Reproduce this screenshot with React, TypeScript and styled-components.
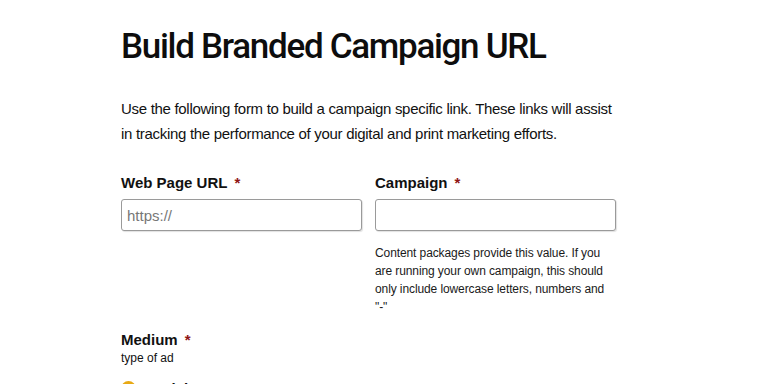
import React from "react";
import styled, { createGlobalStyle } from "styled-components";

const GlobalStyle = createGlobalStyle`
	html, body {
		margin: 0;
		padding: 0;
		background: #fff;
	}
	* {
		box-sizing: border-box;
	}
`;

const Page = styled.div`
	width: 768px;
	height: 384px;
	overflow: hidden;
	padding: 23px 0 0 121px;
	font-family: "Liberation Sans", Arial, sans-serif;
	color: #111;
`;

const Content = styled.div`
	width: 495px;
`;

const Title = styled.h1`
	margin: 0;
	font-family: Roboto, "Liberation Sans", sans-serif;
	font-size: 35px;
	font-weight: 500;
	line-height: 48px;
	letter-spacing: -1.3px;
	color: #0d0d0d;
`;

const Intro = styled.p`
	margin: 25px 0 0;
	width: 520px;
	font-size: 15px;
	line-height: 25px;
	letter-spacing: -0.3px;
`;

const FieldGrid = styled.div`
	display: grid;
	grid-template-columns: 241px 241px;
	column-gap: 13px;
	margin-top: 27px;
`;

const Field = styled.div`
	display: flex;
	flex-direction: column;
`;

const Label = styled.label`
	font-size: 15px;
	font-weight: 700;
	line-height: 20px;
	color: #111;
`;

const Required = styled.span`
	color: #8f1414;
	margin-left: 7px;
`;

const Input = styled.input`
	margin-top: 6px;
	height: 32px;
	width: 100%;
	border: 1px solid #9a9a9a;
	border-radius: 3px;
	box-shadow: 1px 1px 1px rgba(0, 0, 0, 0.12);
	padding: 0 5px;
	font-family: "Liberation Sans", Arial, sans-serif;
	font-size: 15px;
	color: #111;
	outline: none;

	&::placeholder {
		color: #777;
	}
`;

const Help = styled.div`
	margin-top: 13px;
	font-size: 12px;
	line-height: 18px;
	letter-spacing: -0.1px;
	color: #1a1a1a;
`;

const NoWrap = styled.span`
	white-space: nowrap;
`;

const MediumBlock = styled.div`
	margin-top: 14px;
`;

const SubNote = styled.div`
	font-size: 12px;
	line-height: 14px;
	margin-top: 1px;
`;

const OptionRow = styled.div`
	display: flex;
	align-items: center;
	gap: 8px;
	margin-top: 15px;
`;

const Radio = styled.span`
	width: 15px;
	height: 15px;
	border-radius: 50%;
	background: #e8a914;
`;

const OptionLabel = styled.span`
	font-size: 15px;
	font-weight: 700;
`;

export default function App() {
	return (
		<>
			<GlobalStyle />
			<Page>
				<Content>
					<Title>Build Branded Campaign URL</Title>
					<Intro>
						Use the following form to build a campaign specific link. These links will assist
						<br />
						in tracking the performance of your digital and print marketing efforts.
					</Intro>
					<FieldGrid>
						<Field>
							<Label>
								Web Page URL<Required>*</Required>
							</Label>
							<Input placeholder="https://" />
						</Field>
						<Field>
							<Label>
								Campaign<Required>*</Required>
							</Label>
							<Input />
							<Help>
								Content packages provide this value. If you are running your own campaign, this
								should only include lowercase letters, numbers and <NoWrap>"-"</NoWrap>
							</Help>
						</Field>
					</FieldGrid>
					<MediumBlock>
						<Label>
							Medium<Required>*</Required>
						</Label>
						<SubNote>type of ad</SubNote>
						<OptionRow>
							<Radio />
							<OptionLabel>Social</OptionLabel>
						</OptionRow>
					</MediumBlock>
				</Content>
			</Page>
		</>
	);
}
